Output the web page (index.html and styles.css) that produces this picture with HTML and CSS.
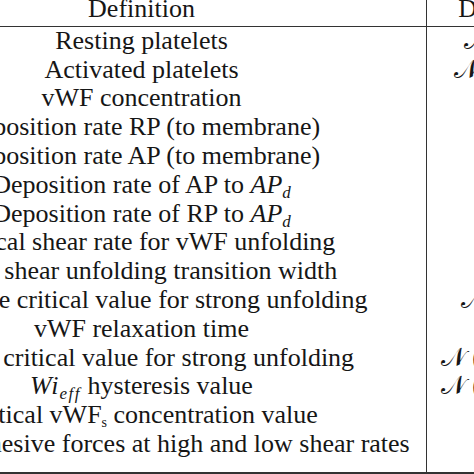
FILE: index.html
```html
<!DOCTYPE html>
<html>
<head>
<meta charset="utf-8">
<link rel="stylesheet" href="styles.css">
</head>
<body>
<div class="table">
  <div class="row head"><div class="def">Definition</div><div class="dist">Distribution</div></div>
  <div class="row"><div class="def">Resting platelets</div><div class="dist"><span class="cal">𝒩</span>(2, 0.25)</div></div>
  <div class="row"><div class="def">Activated platelets</div><div class="dist"><span class="cal">𝒩</span>(0.25, 0.5)</div></div>
  <div class="row"><div class="def">vWF concentration</div><div class="dist">1.0</div></div>
  <div class="row"><div class="def">Deposition rate RP (to membrane)</div><div class="dist">0.1</div></div>
  <div class="row"><div class="def">Deposition rate AP (to membrane)</div><div class="dist">0.2</div></div>
  <div class="row"><div class="def">Deposition rate of AP to <i class="m">AP<sub>d</sub></i></div><div class="dist">0.3</div></div>
  <div class="row"><div class="def">Deposition rate of RP to <i class="m">AP<sub>d</sub></i></div><div class="dist">0.1</div></div>
  <div class="row"><div class="def">Critical shear rate for vWF unfolding</div><div class="dist">5000</div></div>
  <div class="row"><div class="def">vWF shear unfolding transition width</div><div class="dist">500</div></div>
  <div class="row"><div class="def">Effective critical value for strong unfolding</div><div class="dist"><span class="cal">𝒩</span>(1.5, 0.2)</div></div>
  <div class="row"><div class="def">vWF relaxation time</div><div class="dist">0.01</div></div>
  <div class="row"><div class="def">Lower critical value for strong unfolding</div><div class="dist"><span class="cal">𝒩</span>(0.15, 0.025)</div></div>
  <div class="row"><div class="def"><i class="m wi">Wi<sub>eff</sub></i> hysteresis value</div><div class="dist"><span class="cal">𝒩</span>(0.15, 0.025)</div></div>
  <div class="row"><div class="def">Critical vWF<sub class="rs">s</sub> concentration value</div><div class="dist">0.5</div></div>
  <div class="row last"><div class="def">Ratio of adhesive forces at high and low shear rates</div><div class="dist">1.0</div></div>
</div>
</body>
</html>
```
FILE: styles.css
```css
html, body {
  margin: 0;
  padding: 0;
  background: #ffffff;
  overflow: hidden;
}
body {
  font-family: "Liberation Serif", "DejaVu Serif", serif;
  font-size: 26px;
  color: #161616;
}
.table {
  margin-left: -143px;
  margin-top: -5px;
  width: 764px;
  border-bottom: 2px solid #333333;
}
.row {
  display: grid;
  grid-template-columns: 570px 194px;
  line-height: 28.8px;
  white-space: nowrap;
}
.def {
  text-align: center;
  border-right: 1px solid #333333;
}
.dist {
  text-align: center;
}
.head .dist {
  letter-spacing: 0.5px;
}
.cal {
  margin-right: 6px;
}
.head {
  border-bottom: 1px solid #333333;
}
.head .def, .head .dist {
  padding-bottom: 2px;
}
.last .def, .last .dist {
  padding-bottom: 13px;
}
.m {
  font-style: italic;
}
sub {
  font-size: 17px;
  line-height: 0;
  vertical-align: -5px;
}
.wi {
  letter-spacing: 1px;
}
.wi sub {
  letter-spacing: 1.5px;
}
sub.rs {
  font-size: 14px;
  vertical-align: -4px;
}
```
